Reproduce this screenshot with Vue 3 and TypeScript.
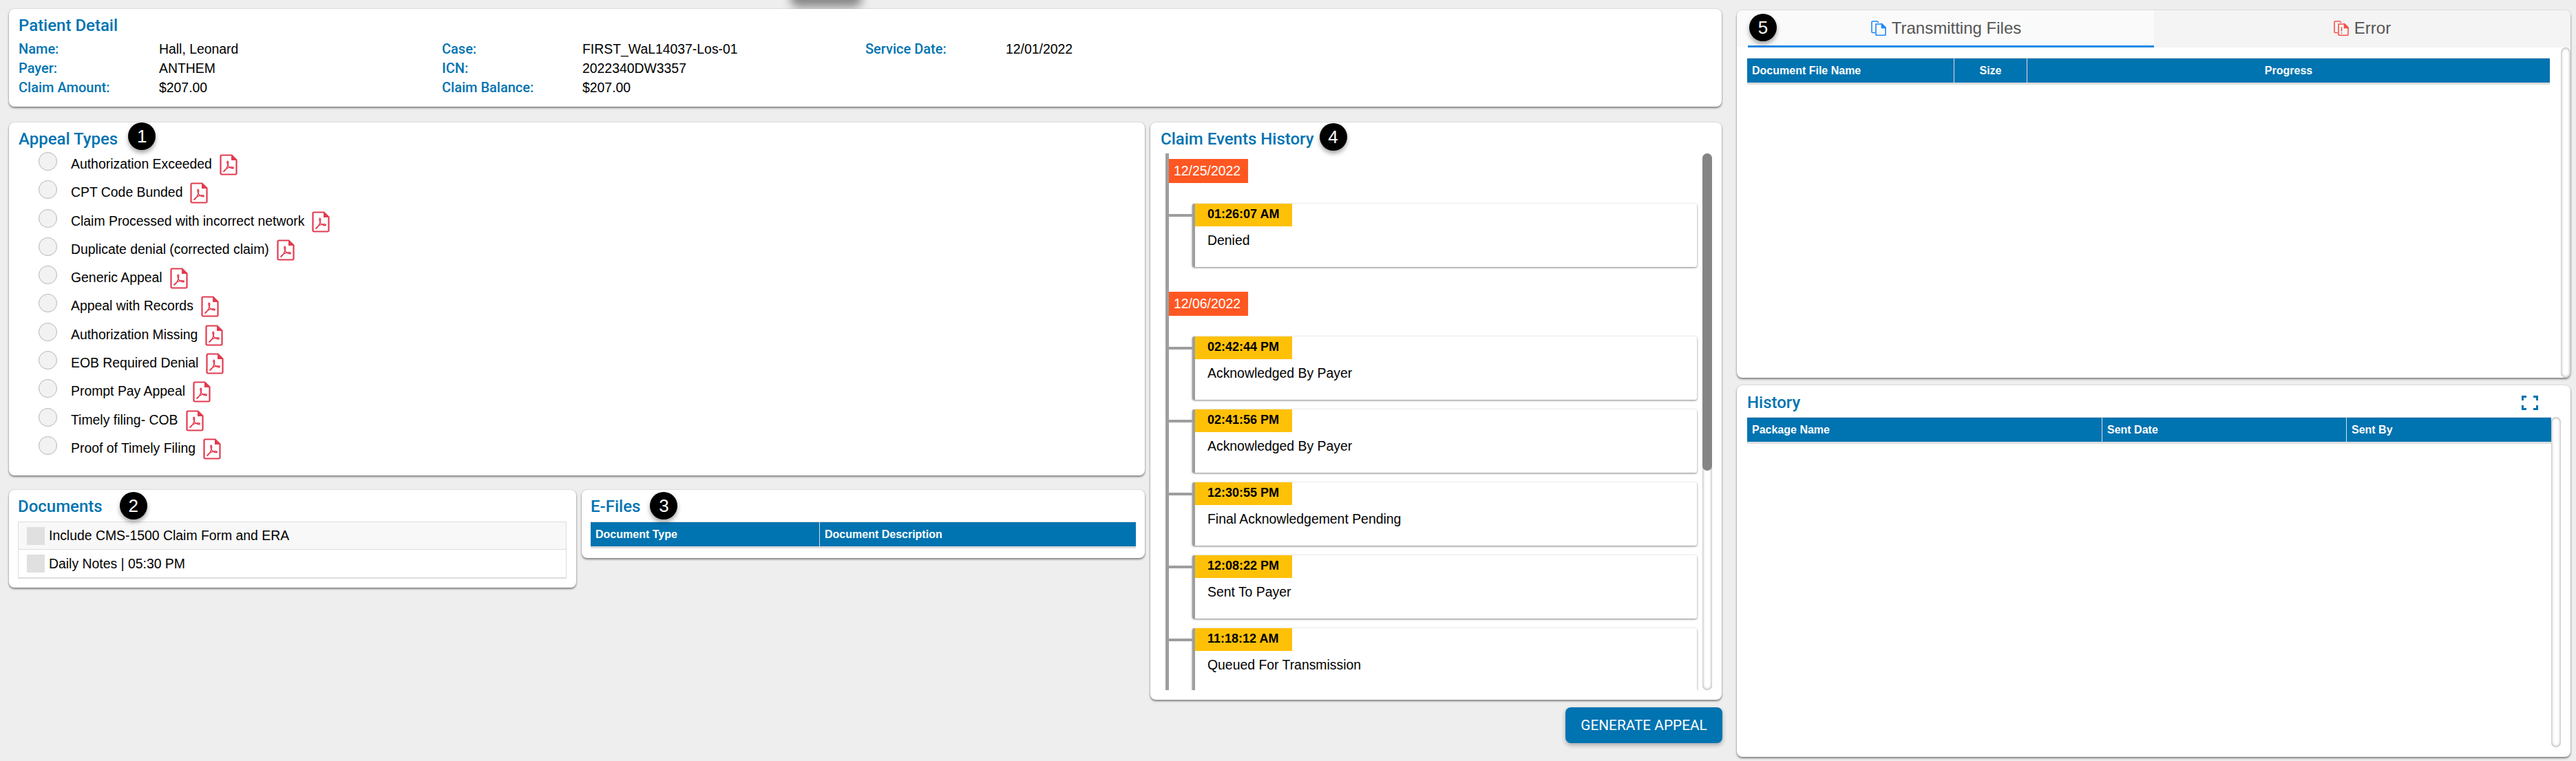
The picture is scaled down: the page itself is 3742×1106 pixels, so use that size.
<script setup lang="ts">
const details = [
  [
    { label: 'Name:', value: 'Hall, Leonard' },
    { label: 'Payer:', value: 'ANTHEM' },
    { label: 'Claim Amount:', value: '$207.00' },
  ],
  [
    { label: 'Case:', value: 'FIRST_WaL14037-Los-01' },
    { label: 'ICN:', value: '2022340DW3357' },
    { label: 'Claim Balance:', value: '$207.00' },
  ],
  [{ label: 'Service Date:', value: '12/01/2022' }],
]

const appealTypes = [
  'Authorization Exceeded',
  'CPT Code Bunded',
  'Claim Processed with incorrect network',
  'Duplicate denial (corrected claim)',
  'Generic Appeal',
  'Appeal with Records',
  'Authorization Missing',
  'EOB Required Denial',
  'Prompt Pay Appeal',
  'Timely filing- COB',
  'Proof of Timely Filing',
]

const documents = ['Include CMS-1500 Claim Form and ERA', 'Daily Notes | 05:30 PM']

const eventDays = [
  {
    date: '12/25/2022',
    events: [{ time: '01:26:07 AM', text: 'Denied' }],
  },
  {
    date: '12/06/2022',
    events: [
      { time: '02:42:44 PM', text: 'Acknowledged By Payer' },
      { time: '02:41:56 PM', text: 'Acknowledged By Payer' },
      { time: '12:30:55 PM', text: 'Final Acknowledgement Pending' },
      { time: '12:08:22 PM', text: 'Sent To Payer' },
      { time: '11:18:12 AM', text: 'Queued For Transmission' },
    ],
  },
]
</script>

<template>
  <div class="page">
    <div class="top-handle"></div>

    <div class="left-area">
      <section class="card patient-card">
        <h2 class="card-title">Patient Detail</h2>
        <div class="detail-grid">
          <div v-for="(col, i) in details" :key="i" class="detail-col">
            <div v-for="row in col" :key="row.label" class="detail-row">
              <span class="detail-label">{{ row.label }}</span>
              <span class="detail-value">{{ row.value }}</span>
            </div>
          </div>
        </div>
      </section>

      <div class="main-row">
        <div class="main-left">
          <section class="card appeal-card">
            <div class="title-row">
              <h2 class="card-title">Appeal Types</h2>
              <span class="step step-1">1</span>
            </div>
            <ul class="appeal-list">
              <li v-for="item in appealTypes" :key="item" class="appeal-item">
                <span class="radio"></span>
                <span class="appeal-label">{{ item }}</span>
                <svg class="pdf-icon" viewBox="0 0 26 31">
                  <path d="M1.5 3A1.500 1.500 0 0 1 3 1.500h14.500l7 7V28a1.500 1.500 0 0 1-1.500 1.500H3A1.500 1.500 0 0 1 1.500 28z" fill="#fff" stroke="#e23b50" stroke-width="2.200" />
                  <path d="M17 1.500l7.500 7.500H17z" fill="#e23b50" />
                  <path d="M5.500 25.500c3-1.500 5.500-6 6.800-10.500.7-2.500.3-4.800-.6-4.800-1.100 0-1.100 3 .2 5.500 1.500 3 4 4.900 7 5.100 1.700.1 2-1.400.4-1.800-3-.7-8 .5-11 3.300-1.300 1.200-2.800 3.200-2.800 3.200z" fill="none" stroke="#e23b50" stroke-width="1.400" />
                </svg>
              </li>
            </ul>
          </section>

          <div class="bottom-row">
            <section class="card documents-card">
              <div class="title-row">
                <h2 class="card-title">Documents</h2>
                <span class="step step-2">2</span>
              </div>
              <div class="doc-list">
                <div v-for="doc in documents" :key="doc" class="doc-row">
                  <span class="doc-check"></span>
                  <span>{{ doc }}</span>
                </div>
              </div>
            </section>

            <section class="card efiles-card">
              <div class="title-row">
                <h2 class="card-title">E-Files</h2>
                <span class="step step-3">3</span>
              </div>
              <div class="data-head">
                <div class="efiles-type">Document Type</div>
                <div class="grow">Document Description</div>
              </div>
            </section>
          </div>
        </div>

        <div class="main-right">
          <section class="card events-card">
            <div class="title-row">
              <h2 class="card-title">Claim Events History</h2>
              <span class="step step-4">4</span>
            </div>
            <div class="events-body">
              <div class="timeline">
                <div v-for="day in eventDays" :key="day.date" class="day">
                  <div class="day-date">{{ day.date }}</div>
                  <div v-for="ev in day.events" :key="ev.time" class="event">
                    <span class="connector"></span>
                    <div class="event-time">{{ ev.time }}</div>
                    <div class="event-text">{{ ev.text }}</div>
                  </div>
                </div>
              </div>
              <div class="scroll-track"><div class="scroll-thumb"></div></div>
            </div>
          </section>
          <button class="generate-btn">GENERATE APPEAL</button>
        </div>
      </div>
    </div>

    <div class="right-area">
      <section class="card transmit-card">
        <div class="tabs">
          <span class="step step-5">5</span>
          <div class="tab tab-active">
            <svg class="tab-icon" viewBox="0 0 22 22" fill="none" stroke="#1e88f5" stroke-width="1.600">
              <path d="M6 17.500H2a1 1 0 0 1-1-1V2a1 1 0 0 1 1-1h7l2 2" />
              <path d="M7 5h9l5 5v10.500a.8.8 0 0 1-.8.8H7.800a.8.8 0 0 1-.8-.8z" />
              <path d="M15.500 5v5.500H21z" fill="#1e88f5" />
            </svg>
            <span>Transmitting Files</span>
          </div>
          <div class="tab">
            <svg class="tab-icon" viewBox="0 0 22 22" fill="none" stroke="#f4514a" stroke-width="1.600">
              <path d="M6 17.500H2a1 1 0 0 1-1-1V2a1 1 0 0 1 1-1h7l2 2" />
              <path d="M7 5h9l5 5v10.500a.8.8 0 0 1-.8.8H7.800a.8.8 0 0 1-.8-.8z" />
              <path d="M15.500 5v5.500H21z" fill="#f4514a" />
              <path d="M11.500 9.500v6M11.500 17.500v1.500" />
            </svg>
            <span>Error</span>
          </div>
        </div>
        <div class="transmit-body">
          <div class="transmit-main">
            <div class="data-head">
              <div class="col-file">Document File Name</div>
              <div class="col-size">Size</div>
              <div class="grow col-progress">Progress</div>
            </div>
          </div>
          <div class="scroll-track"></div>
        </div>
      </section>

      <section class="card history-card">
        <div class="history-title">
          <h2 class="card-title">History</h2>
          <svg class="expand-icon" viewBox="0 0 24 21" fill="none" stroke="#0073b1" stroke-width="3">
            <path d="M1.500 7V1.500H7M17 1.500h5.500V7M22.500 14v5.500H17M7 19.500H1.500V14" />
          </svg>
        </div>
        <div class="history-body">
          <div class="history-main">
            <div class="data-head">
              <div class="col-package">Package Name</div>
              <div class="col-date">Sent Date</div>
              <div class="grow">Sent By</div>
            </div>
          </div>
          <div class="scroll-track"></div>
        </div>
      </section>
    </div>
  </div>
</template>

<style>
html,
body {
  margin: 0;
  background: #eeeeee;
}
</style>

<style scoped>
.page {
  position: relative;
  display: flex;
  width: 3742px;
  height: 1106px;
  box-sizing: border-box;
  padding: 13px 8px 0 13px;
  gap: 22px;
  background: #eeeeee;
  overflow: hidden;
  font-family: 'Liberation Sans', Arial, sans-serif;
  font-size: 19.4px;
  color: #000;
}

.top-handle {
  position: absolute;
  left: 1148px;
  top: -16px;
  width: 104px;
  height: 26px;
  border-radius: 12px;
  background: #858585;
  filter: blur(7px);
}

.card {
  position: relative;
  box-sizing: border-box;
  background: #fff;
  border-radius: 8px;
  box-shadow: 0 2px 3px rgba(0, 0, 0, 0.45), 0 0 2px rgba(0, 0, 0, 0.2);
}

.card-title {
  margin: 0;
  font-family: Roboto, 'Liberation Sans', sans-serif;
  font-size: 24px;
  font-weight: 500;
  line-height: 28px;
  color: #0073b1;
}

.title-row {
  display: flex;
  align-items: center;
}

.step {
  display: flex;
  align-items: center;
  justify-content: center;
  width: 40px;
  height: 40px;
  flex: none;
  border-radius: 50%;
  background: #000;
  color: #fff;
  font-family: 'Liberation Sans', sans-serif;
  font-size: 26px;
  box-shadow: 0 4px 6px rgba(0, 0, 0, 0.35);
}

/* left column */
.left-area {
  width: 2488px;
  flex: none;
}

.patient-card {
  height: 142px;
  padding: 10px 14px 0;
}

.detail-grid {
  display: flex;
  margin-top: 6px;
}

.detail-col {
  width: 615px;
}

.detail-row {
  display: flex;
  height: 28px;
  align-items: center;
}

.detail-label {
  width: 204px;
  flex: none;
  font-family: Roboto, 'Liberation Sans', sans-serif;
  font-size: 20px;
  font-weight: 500;
  color: #0073b1;
}

.main-row {
  display: flex;
  gap: 8px;
  margin-top: 23px;
}

.main-left {
  width: 1650px;
  flex: none;
}

.main-right {
  display: flex;
  flex-direction: column;
  width: 830px;
  flex: none;
}

.appeal-card {
  height: 513px;
  padding: 10px 14px 0;
}

.appeal-card .title-row {
  height: 28px;
}

.step-1 {
  margin-left: 15px;
  margin-top: -8px;
}

.appeal-list {
  margin: 5px 0 0;
  padding: 0 0 0 29px;
  list-style: none;
}

.appeal-item {
  display: flex;
  align-items: flex-start;
  height: 41.3px;
}

.radio {
  width: 25px;
  height: 25px;
  flex: none;
  border: 1px solid #b5b5b5;
  border-radius: 50%;
  background: #f2f2f2;
}

.appeal-label {
  margin-left: 20px;
  margin-top: 5px;
  line-height: 24px;
}

.pdf-icon {
  width: 26px;
  height: 31px;
  flex: none;
  margin-left: 11px;
  margin-top: 3px;
}

.bottom-row {
  display: flex;
  align-items: flex-start;
  gap: 8px;
  margin-top: 21px;
}

.documents-card {
  width: 824px;
  height: 142px;
  padding: 0 14px 0 13px;
}

.documents-card .title-row,
.efiles-card .title-row {
  height: 46px;
  padding-top: 2px;
  box-sizing: border-box;
}

.step-2 {
  margin-left: 25px;
  margin-top: -2px;
}

.doc-list {
  border: 1px solid #dddddd;
  border-bottom-width: 2px;
}

.doc-row {
  display: flex;
  align-items: center;
  height: 40px;
  box-sizing: border-box;
  padding-left: 12px;
  gap: 6px;
  background: #fff;
}

.doc-row:first-child {
  background: #f8f8f8;
  border-bottom: 1px solid #dddddd;
}

.doc-check {
  width: 26px;
  height: 26px;
  background: #e0e0e0;
}

.efiles-card {
  width: 818px;
  height: 99px;
  padding: 0 13px;
}

.step-3 {
  margin-left: 14px;
  margin-top: -2px;
}

/* blue table header used by every empty grid */
.data-head {
  display: flex;
  height: 39px;
  box-sizing: border-box;
  border-top: 1px solid #dddddd;
  border-bottom: 3px solid #dddddd;
  background: #0073b1;
  color: #fff;
  font-size: 16px;
  font-weight: 700;
  line-height: 35px;
}

.data-head > div {
  box-sizing: border-box;
  padding-left: 7px;
}

.data-head > div + div {
  border-left: 1px solid #dddddd;
}

.grow {
  flex: 1;
}

.efiles-type {
  width: 332px;
}

/* events */
.events-card {
  height: 839px;
  padding: 10px 14px 0;
}

.events-card .title-row {
  height: 28px;
  margin-left: 1px;
}

.step-4 {
  margin-left: 8px;
  margin-top: -6px;
}

.events-body {
  display: flex;
  height: 780px;
  margin-top: 7px;
}

.timeline {
  flex: 1;
  margin-left: 8px;
  margin-right: 4px;
  padding-top: 8px;
  padding-right: 4px;
  overflow: hidden;
  box-sizing: border-box;
  border-left: 5px solid #9e9e9e;
}

.day {
  padding-bottom: 22px;
}

.day-date {
  width: 115px;
  height: 35px;
  margin-bottom: 30px;
  padding-left: 7px;
  box-sizing: border-box;
  background: #ff5722;
  color: #fff;
  line-height: 35px;
}

.event {
  position: relative;
  height: 92px;
  margin: 0 0 14px 34px;
  box-sizing: border-box;
  border-left: 4px solid #9e9e9e;
  border-radius: 3px;
  background: #fff;
  box-shadow: 0 1px 3px rgba(0, 0, 0, 0.5);
}

.connector {
  position: absolute;
  left: -38px;
  top: 15px;
  width: 34px;
  height: 4px;
  background: #9e9e9e;
}

.event-time {
  width: 141px;
  height: 33px;
  padding-left: 18px;
  box-sizing: border-box;
  background: #ffc107;
  font-size: 18px;
  font-weight: 700;
  line-height: 31px;
}

.event-text {
  margin-top: 8px;
  padding-left: 18px;
  line-height: 24px;
}

.scroll-track {
  width: 14px;
  flex: none;
  box-sizing: border-box;
  border-radius: 7px;
  background: #fff;
  box-shadow: inset 0 0 4px rgba(0, 0, 0, 0.45);
}

.scroll-thumb {
  height: 461px;
  border-radius: 7px;
  background: #858585;
}

.generate-btn {
  align-self: flex-end;
  width: 228px;
  height: 52px;
  margin-top: 11px;
  margin-right: -1px;
  padding: 0;
  border: 0;
  border-radius: 8px;
  background: #0073b1;
  color: #fff;
  font-family: Roboto, 'Liberation Sans', sans-serif;
  font-size: 20.8px;
  box-shadow: 0 3px 6px rgba(0, 0, 0, 0.3);
}

/* right column */
.right-area {
  display: flex;
  flex-direction: column;
  gap: 11px;
  width: 1211px;
  flex: none;
  padding-top: 2px;
}

.transmit-card {
  display: flex;
  flex-direction: column;
  height: 534px;
  overflow: hidden;
}

.tabs {
  position: relative;
  display: flex;
  height: 54px;
  flex: none;
  padding-left: 16px;
  background: #fafafa;
}

.step-5 {
  position: absolute;
  left: 18px;
  top: 5px;
}

.tab {
  display: flex;
  flex: 1;
  align-items: center;
  justify-content: center;
  gap: 8px;
  box-sizing: border-box;
  padding-bottom: 3px;
  background: #f4f4f4;
  color: #555;
  font-size: 24px;
}

.tab-active {
  flex: none;
  width: 590px;
  padding-right: 14px;
  padding-bottom: 0;
  background: #fafafa;
  border-bottom: 3px solid #1e88e5;
}

.tab-icon {
  width: 22px;
  height: 22px;
  flex: none;
}

.transmit-body {
  display: flex;
  flex: 1;
  min-height: 0;
  padding-left: 15px;
}

.transmit-main {
  flex: 1;
  padding-top: 15px;
  padding-right: 16px;
}

.col-file {
  width: 300px;
}

.col-size {
  width: 106px;
  padding-left: 0 !important;
  text-align: center;
}

.col-progress {
  padding-left: 0 !important;
  text-align: center;
}

.history-card {
  display: flex;
  flex-direction: column;
  height: 540px;
  padding: 0 0 14px 15px;
}

.history-title {
  display: flex;
  align-items: center;
  justify-content: space-between;
  height: 46px;
  padding-top: 4px;
  padding-right: 47px;
  box-sizing: border-box;
}

.expand-icon {
  width: 24px;
  height: 21px;
}

.history-body {
  display: flex;
  flex: 1;
  min-height: 0;
  padding-right: 14px;
}

.history-main {
  flex: 1;
}

.col-package {
  width: 515px;
}

.col-date {
  width: 355px;
}
</style>
